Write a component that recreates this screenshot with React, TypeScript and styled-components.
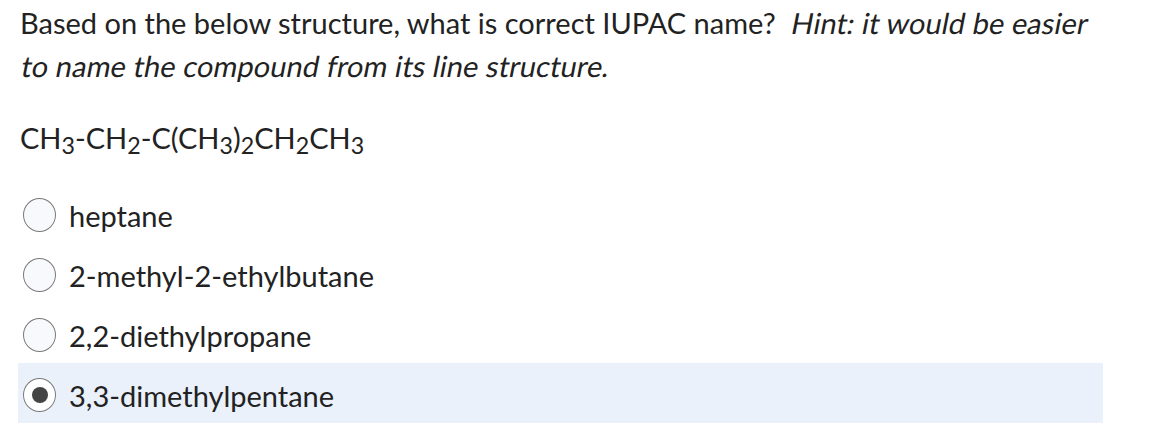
import React, { useState } from 'react';
import styled, { createGlobalStyle } from 'styled-components';

const GlobalStyle = createGlobalStyle`
  body {
    margin: 0;
    background: #ffffff;
    font-family: Lato, "Open Sans", sans-serif;
    color: #222222;
  }
`;

const Container = styled.div`
  width: 1085px;
  padding: 0 0 0 18px;
`;

const Question = styled.p`
  margin: 0;
  padding: 1px 0 0 2px;
  font-size: 29px;
  line-height: 43px;
`;

// the hint is rendered as a slanted regular face (synthetic oblique)
const Hint = styled.span`
  display: inline-block;
  font-style: normal;
  transform: skewX(-11deg);
  transform-origin: 0 75%;
  letter-spacing: 0.1px;
`;

const Formula = styled.p`
  margin: 0;
  padding: 31px 0 0 2px;
  font-size: 29px;
  line-height: 40px;

  sub {
    font-size: 80%;
    line-height: 0;
    vertical-align: -0.22em;
  }
`;

const Options = styled.div`
  display: flex;
  flex-direction: column;
  margin-top: 25px;
`;

const Row = styled.label<{ $selected: boolean }>`
  display: flex;
  align-items: center;
  gap: 13px;
  height: 60px;
  padding-left: 5px;
  background: ${(p) => (p.$selected ? '#eaf1fb' : 'transparent')};
  font-size: 29px;
  cursor: pointer;
`;

const Label = styled.span`
  padding-top: 5px;
`;

const Radio = styled.span<{ $checked: boolean }>`
  position: relative;
  width: 33px;
  height: 34px;
  box-sizing: border-box;
  border-radius: 50%;
  border: 1px solid #7a7a7a;
  background: ${(p) => (p.$checked ? '#ffffff' : '#f8f9fc')};
  flex-shrink: 0;
  margin-top: 4px;

  &::after {
    content: '';
    display: ${(p) => (p.$checked ? 'block' : 'none')};
    position: absolute;
    left: 50%;
    top: 50%;
    width: 16px;
    height: 16px;
    margin: -8px 0 0 -8px;
    border-radius: 50%;
    background: #444444;
  }
`;

const HiddenInput = styled.input`
  display: none;
`;

const choices = [
  'heptane',
  '2-methyl-2-ethylbutane',
  '2,2-diethylpropane',
  '3,3-dimethylpentane',
];

const App: React.FC = () => {
  const [selected, setSelected] = useState(3);

  return (
    <Container>
      <GlobalStyle />
      <Question>
        Based on the below structure, what is correct IUPAC name?&nbsp;&nbsp;
        <Hint>Hint: it would be easier</Hint>
        <br />
        <Hint>to name the compound from its line structure.</Hint>
      </Question>
      <Formula>
        CH<sub>3</sub>-CH<sub>2</sub>-C(CH<sub>3</sub>)<sub>2</sub>CH<sub>2</sub>CH<sub>3</sub>
      </Formula>
      <Options>
        {choices.map((c, i) => (
          <Row key={c} $selected={selected === i}>
            <HiddenInput
              type="radio"
              name="answer"
              checked={selected === i}
              onChange={() => setSelected(i)}
            />
            <Radio $checked={selected === i} />
            <Label>{c}</Label>
          </Row>
        ))}
      </Options>
    </Container>
  );
};

export default App;
